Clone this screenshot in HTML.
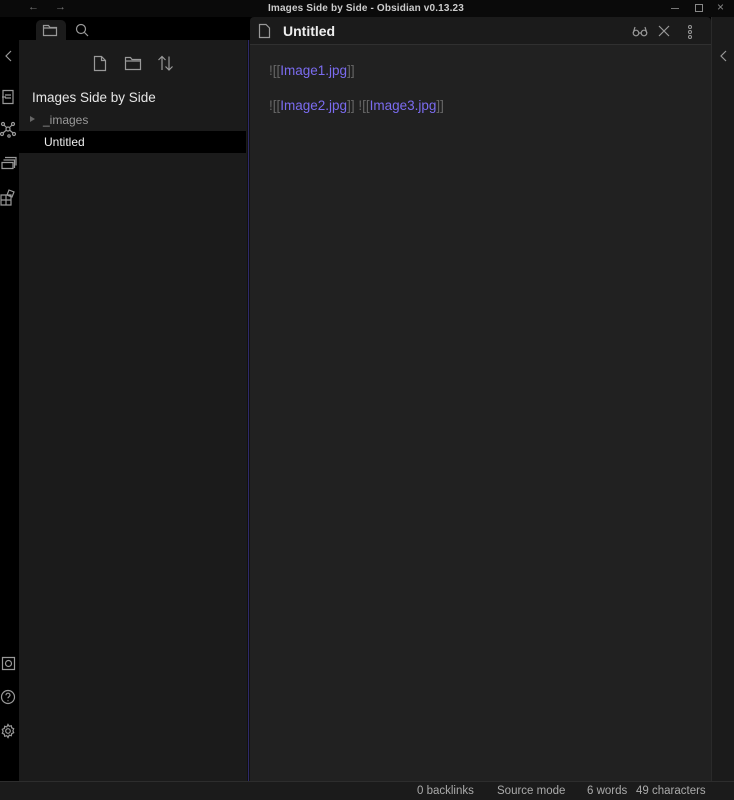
<!DOCTYPE html>
<html><head><meta charset="utf-8"><style>
*{margin:0;padding:0;box-sizing:border-box}
body{width:734px;height:800px;background:#000;font-family:"Liberation Sans",sans-serif;position:relative;overflow:hidden;color:#ddd}
.abs{position:absolute}
svg{position:absolute;fill:none;stroke:#999;stroke-width:1.2}
</style></head><body>
<div class="abs" style="left:0;top:0;width:734px;height:17px;background:#0a0a0a"></div>
<div class="abs" style="left:268px;top:3px;font-size:10px;font-weight:bold;color:#ccc;letter-spacing:.15px">Images Side by Side - Obsidian v0.13.23</div>
<div class="abs" style="left:28px;top:1px;font-size:11px;color:#777">←</div>
<div class="abs" style="left:55px;top:1px;font-size:11px;color:#777">→</div>
<div class="abs" style="left:671px;top:8px;width:8px;height:1px;background:#777"></div>
<div class="abs" style="left:695px;top:4px;width:8px;height:8px;border:1px solid #888"></div>
<div class="abs" style="left:717px;top:0px;font-size:12px;color:#888">×</div>

<div class="abs" style="left:19px;top:40px;width:228px;height:741px;background:#1b1b1b"></div>
<div class="abs" style="left:36px;top:20px;width:30px;height:21px;background:#1b1b1b;border-radius:5px 5px 0 0"></div>
<svg style="left:42px;top:23px" width="16" height="14"><path d="M1.5 2.5h5l1.5 2h6.5v8h-13z M1.5 5h13"/></svg>
<svg style="left:75px;top:23px" width="14" height="14"><circle cx="6" cy="6" r="4.5"/><path d="M9.5 9.5l3.5 3.5"/></svg>
<svg style="left:93px;top:55px" width="14" height="17"><path d="M1.5 1.5h7l4 4v10h-11z M8.5 1.5v4h4"/></svg>
<svg style="left:124px;top:55px" width="18" height="16"><path d="M1.5 2.5h5l1.5 2h8.5v10h-15z M1.5 6h15"/></svg>
<svg style="left:157px;top:55px" width="17" height="16"><path d="M5 15V1.5M1.5 5L5 1.5 8.5 5M12 1.5V15M8.5 11.5L12 15l3.5-3.5"/></svg>
<div class="abs" style="left:32px;top:90px;font-size:13.5px;color:#e6e6e6">Images Side by Side</div>
<div class="abs" style="left:30px;top:116px;width:0;height:0;border-left:5px solid #666;border-top:3.5px solid transparent;border-bottom:3.5px solid transparent"></div>
<div class="abs" style="left:43px;top:113px;font-size:12px;color:#999">_images</div>
<div class="abs" style="left:19px;top:131px;width:227px;height:22px;background:#000"></div>
<div class="abs" style="left:44px;top:135px;font-size:12px;color:#eee">Untitled</div>

<svg style="left:2px;top:49px" width="12" height="14"><path d="M9 2L4 7l5 5"/></svg>
<svg style="left:1px;top:89px" width="14" height="16"><path d="M2 1.5h10v13H2z M4 6h6M4 9h6M1 8h4"/></svg>
<svg style="left:0px;top:121px" width="17" height="17"><circle cx="8" cy="8" r="2"/><circle cx="3" cy="3" r="1.5"/><circle cx="13" cy="3" r="1.5"/><circle cx="2" cy="13" r="1.5"/><circle cx="14" cy="13" r="1.5"/><circle cx="9" cy="15" r="1.2"/><path d="M4 4l3 3M12 4l-3 3M3 12l3.5-3M13 12l-3.5-3"/></svg>
<svg style="left:1px;top:156px" width="16" height="14"><path d="M4 1.5h11v8M2.5 4h11v8M1 6.5h11v6H1z"/></svg>
<svg style="left:0px;top:189px" width="17" height="17"><path d="M1 6h10v10H1zM1 11h10M6 6v10M9 1l5 2-2 5-5-2z"/></svg>
<svg style="left:1px;top:656px" width="15" height="15"><path d="M1.5 1.5h12v12h-12z"/><circle cx="7.5" cy="7.5" r="3"/></svg>
<svg style="left:0px;top:689px" width="16" height="16"><circle cx="8" cy="8" r="6.5"/><path d="M6 6.2c0-1.3 1-2 2-2s2 .7 2 1.9c0 1.6-2 1.6-2 3.2M8 11.2v1"/></svg>
<svg style="left:0px;top:723px" width="16" height="16"><circle cx="8" cy="8" r="2.3"/><path d="M8 1.5l1.2 1.8 2.1-.6.4 2.1 2 .9-.8 2 .8 2-2 .9-.4 2.1-2.1-.6L8 14.5l-1.2-1.8-2.1.6-.4-2.1-2-.9.8-2-.8-2 2-.9.4-2.1 2.1.6z"/></svg>

<div class="abs" style="left:247px;top:40px;width:3px;height:741px;background:#111"></div>
<div class="abs" style="left:248px;top:40px;width:1px;height:741px;background:#2e2a6a"></div>

<div class="abs" style="left:250px;top:17px;width:461px;height:28px;background:#1b1b1b;border-radius:4px 4px 0 0;border-bottom:1px solid #303030"></div>
<div class="abs" style="left:250px;top:45px;width:461px;height:736px;background:#212121"></div>
<svg style="left:258px;top:23px" width="13" height="16"><path d="M1.5 1.5h6.5l3.5 3.5v9.5h-10z"/></svg>
<div class="abs" style="left:283px;top:23px;font-size:14px;font-weight:bold;color:#eee">Untitled</div>
<svg style="left:632px;top:25px" width="16" height="12"><circle cx="4" cy="8" r="2.8"/><circle cx="12" cy="8" r="2.8"/><path d="M6.8 8h2.4M1.2 8L3 2M14.8 8L13 2"/></svg>
<svg style="left:658px;top:25px" width="12" height="12"><path d="M1 1l10 10M11 1L1 11"/></svg>
<div class="abs" style="left:688px;top:25px;width:4px;height:4px;border:1px solid #999;border-radius:50%"></div>
<div class="abs" style="left:688px;top:30px;width:4px;height:4px;border:1px solid #999;border-radius:50%"></div>
<div class="abs" style="left:688px;top:35px;width:4px;height:4px;border:1px solid #999;border-radius:50%"></div>
<div class="abs" style="left:269px;top:63px;font-size:13.5px;color:#666">![[<span style="color:#7b6cf0">Image1.jpg</span>]]</div>
<div class="abs" style="left:269px;top:98px;font-size:13.5px;color:#666">![[<span style="color:#7b6cf0">Image2.jpg</span>]] ![[<span style="color:#7b6cf0">Image3.jpg</span>]]</div>

<div class="abs" style="left:711px;top:17px;width:23px;height:764px;background:#1b1b1b;border-left:1px solid #2a2a2a"></div>
<svg style="left:718px;top:49px" width="10" height="14"><path d="M8 2L3 7l5 5"/></svg>

<div class="abs" style="left:0;top:781px;width:734px;height:19px;background:#1b1b1b;border-top:1px solid #2d2d2d"></div>
<div class="abs" style="left:417px;top:785px;font-size:11.5px;color:#aaa">0 backlinks</div>
<div class="abs" style="left:497px;top:785px;font-size:11.5px;color:#aaa">Source mode</div>
<div class="abs" style="left:587px;top:785px;font-size:11.5px;color:#aaa">6 words</div>
<div class="abs" style="left:636px;top:785px;font-size:11.5px;color:#aaa">49 characters</div>
</body></html>
